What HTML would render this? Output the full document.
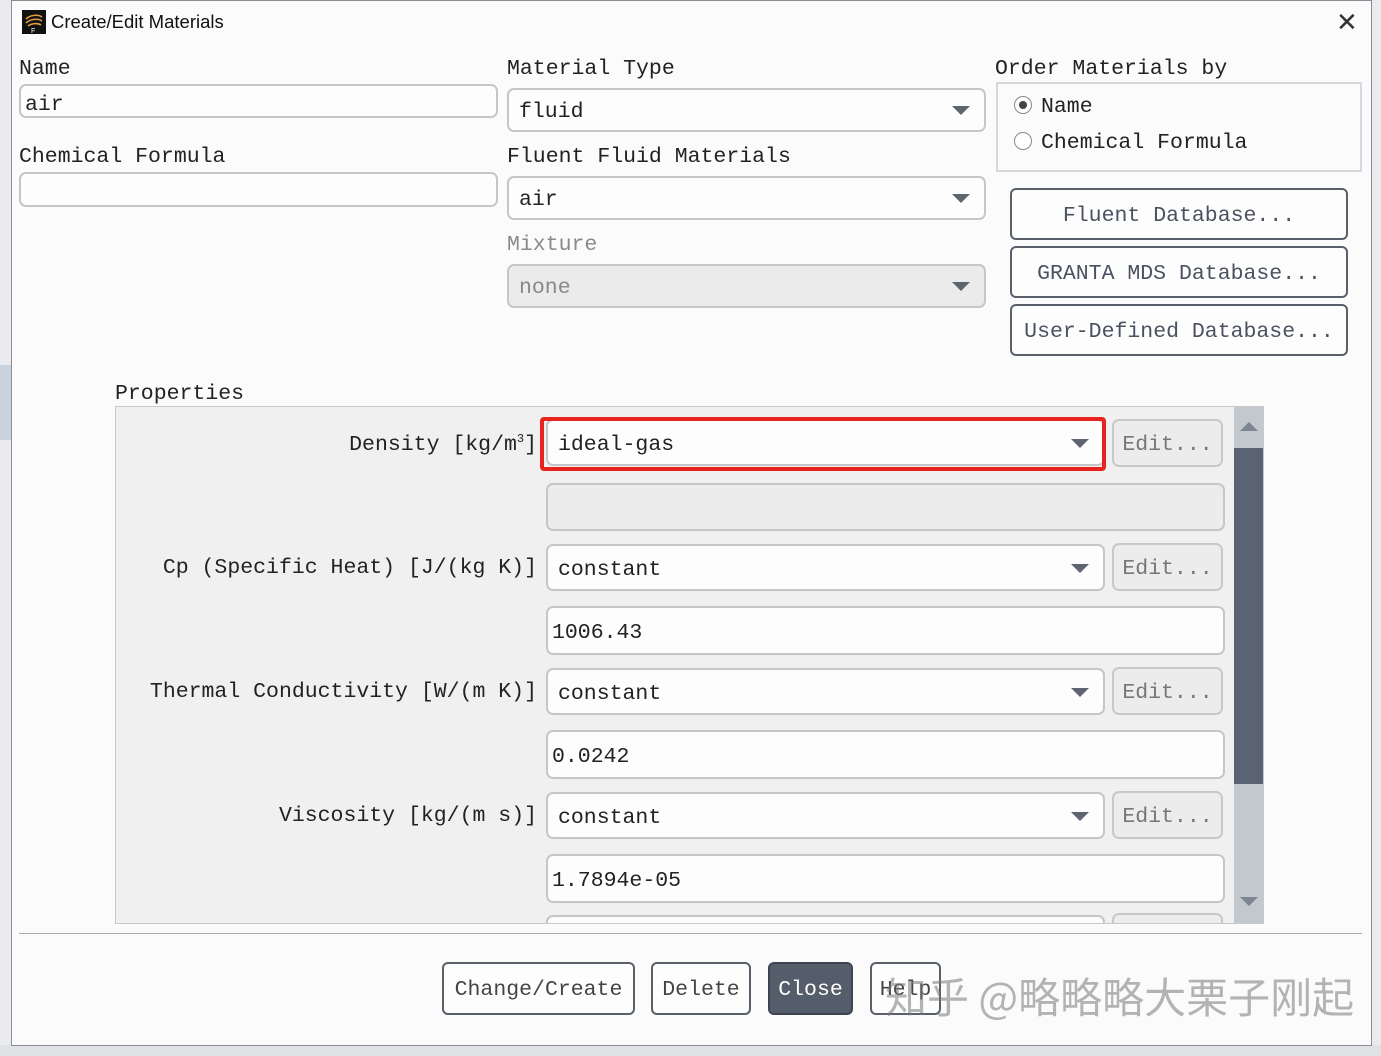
<!DOCTYPE html>
<html><head><meta charset="utf-8">
<style>
*{box-sizing:border-box;margin:0;padding:0}
html,body{width:1381px;height:1056px;overflow:hidden;background:#e9ebee;position:relative;font-family:"Liberation Mono","Noto Serif CJK SC",monospace;}
.a{position:absolute}
.t{font-size:21.5px;color:#222;white-space:pre;line-height:1;transform:translateY(2px)}
.inp{position:absolute;background:#fdfdfd;border:2px solid #c4c6ca;border-radius:7px}
.dd{position:absolute;background:#fdfdfd;border:2px solid #c4c6ca;border-radius:7px;font-size:21.5px;color:#222;padding-left:10px;padding-top:4px;display:flex;align-items:center}
.dd .ar{position:absolute;right:14px;top:50%;margin-top:-4px;width:0;height:0;border-left:9px solid transparent;border-right:9px solid transparent;border-top:9px solid #5e6570}
.btn{position:absolute;border:2px solid #59606a;border-radius:6px;background:#fdfdfd;font-size:21.5px;color:#4a5260;display:flex;align-items:center;justify-content:center;padding-top:3px}
.ed{position:absolute;border:2px solid #c6c8cc;border-radius:7px;background:#ececec;font-size:21.5px;color:#777;display:flex;align-items:center;justify-content:center;padding-top:3px}
.lbl{position:absolute;font-size:21.5px;color:#222;white-space:pre;transform:translateY(2px)}
</style></head><body>
<div class="a" style="left:0;top:365px;width:11px;height:75px;background:#c9d3df"></div>
<div class="a" style="left:0;top:1045px;width:1381px;height:11px;background:#dfe1e4"></div>
<div class="a" style="left:11px;top:0;width:1361px;height:1046px;background:#fbfbfb;border:1px solid #8a8d92"></div>
<svg class="a" style="left:22px;top:10px" width="24" height="24" viewBox="0 0 24 24"><rect width="24" height="24" fill="#111"/><path d="M4 9c4-4 12-5 16-2M4 13c4-4 12-5 16-2M6 16c4-3 10-3 13-1" stroke="#e0a040" stroke-width="1.6" fill="none"/><text x="9" y="23" font-size="7" fill="#fff" font-family="Liberation Sans">F</text></svg>
<div class="a" style="left:51px;top:11px;font-family:'Liberation Sans',sans-serif;font-size:18.5px;color:#111">Create/Edit Materials</div>
<div class="a" style="left:1336px;top:7px;font-family:'Liberation Sans',sans-serif;font-size:26px;color:#333">✕</div>

<div class="a t" style="left:19px;top:57px">Name</div>
<div class="inp" style="left:19px;top:84px;width:479px;height:34px"></div>
<div class="a t" style="left:25px;top:93px">air</div>
<div class="a t" style="left:19px;top:145px">Chemical Formula</div>
<div class="inp" style="left:19px;top:172px;width:479px;height:35px"></div>

<div class="a t" style="left:507px;top:57px">Material Type</div>
<div class="dd" style="left:507px;top:88px;width:479px;height:44px">fluid<span class="ar"></span></div>
<div class="a t" style="left:507px;top:145px">Fluent Fluid Materials</div>
<div class="dd" style="left:507px;top:176px;width:479px;height:44px">air<span class="ar"></span></div>
<div class="a t" style="left:507px;top:233px;color:#8a8a8a">Mixture</div>
<div class="dd" style="left:507px;top:264px;width:479px;height:44px;background:#ebebeb;color:#888">none<span class="ar"></span></div>

<div class="a t" style="left:995px;top:57px">Order Materials by</div>
<div class="a" style="left:996px;top:82px;width:366px;height:90px;border:2px solid #d6d8db"></div>
<div class="a" style="left:1014px;top:96px;width:18px;height:18px;border-radius:50%;border:1.5px solid #888;background:#fff"></div>
<div class="a" style="left:1019px;top:101px;width:8px;height:8px;border-radius:50%;background:#444"></div>
<div class="a t" style="left:1041px;top:95px">Name</div>
<div class="a" style="left:1014px;top:132px;width:18px;height:18px;border-radius:50%;border:1.5px solid #888;background:#fff"></div>
<div class="a t" style="left:1041px;top:131px">Chemical Formula</div>
<div class="btn" style="left:1010px;top:188px;width:338px;height:52px">Fluent Database...</div>
<div class="btn" style="left:1010px;top:246px;width:338px;height:52px">GRANTA MDS Database...</div>
<div class="btn" style="left:1010px;top:304px;width:338px;height:52px">User-Defined Database...</div>

<div class="a t" style="left:115px;top:382px">Properties</div>
<div class="a" style="left:115px;top:406px;width:1149px;height:518px;background:#f0f0f0;border:1px solid #c7c9cc;overflow:hidden">
 <div class="lbl" style="top:23px;right:726px">Density [kg/m<sup style="font-size:12px">3</sup>]</div>
 <div class="lbl" style="top:147px;right:726px">Cp (Specific Heat) [J/(kg K)]</div>
 <div class="lbl" style="top:271px;right:726px">Thermal Conductivity [W/(m K)]</div>
 <div class="lbl" style="top:395px;right:726px">Viscosity [kg/(m s)]</div>
 <div class="dd" style="left:430px;top:12px;width:559px;height:47px">ideal-gas<span class="ar"></span></div>
 <div class="a" style="left:424px;top:10px;width:566px;height:54px;border:4px solid #e8231f;border-radius:4px"></div>
 <div class="ed" style="left:996px;top:12px;width:111px;height:48px">Edit...</div>
 <div class="inp" style="left:430px;top:76px;width:679px;height:48px;background:#ececec"></div>
 <div class="dd" style="left:430px;top:137px;width:559px;height:47px">constant<span class="ar"></span></div>
 <div class="ed" style="left:996px;top:136px;width:111px;height:48px">Edit...</div>
 <div class="inp" style="left:430px;top:199px;width:679px;height:49px"></div>
 <div class="a t" style="left:436px;top:214px">1006.43</div>
 <div class="dd" style="left:430px;top:261px;width:559px;height:47px">constant<span class="ar"></span></div>
 <div class="ed" style="left:996px;top:260px;width:111px;height:48px">Edit...</div>
 <div class="inp" style="left:430px;top:323px;width:679px;height:49px"></div>
 <div class="a t" style="left:436px;top:338px">0.0242</div>
 <div class="dd" style="left:430px;top:385px;width:559px;height:47px">constant<span class="ar"></span></div>
 <div class="ed" style="left:996px;top:384px;width:111px;height:48px">Edit...</div>
 <div class="inp" style="left:430px;top:447px;width:679px;height:49px"></div>
 <div class="a t" style="left:436px;top:462px">1.7894e-05</div>
 <div class="inp" style="left:430px;top:508px;width:559px;height:47px"></div>
 <div class="ed" style="left:996px;top:506px;width:111px;height:48px"></div>
 <div class="a" style="left:1118px;top:0;width:30px;height:518px;background:#c2c8cd"></div>
 <div class="a" style="left:1118px;top:41px;width:30px;height:336px;background:#5a6372"></div>
 <div class="a" style="left:1124px;top:15px;width:0;height:0;border-left:9px solid transparent;border-right:9px solid transparent;border-bottom:9px solid #7d8590"></div>
 <div class="a" style="left:1124px;top:490px;width:0;height:0;border-left:9px solid transparent;border-right:9px solid transparent;border-top:9px solid #7d8590"></div>
</div>
<div class="a" style="left:19px;top:933px;width:1343px;height:1px;background:#a8aaae"></div>
<div class="btn" style="left:442px;top:962px;width:193px;height:53px;color:#444">Change/Create</div>
<div class="btn" style="left:651px;top:962px;width:100px;height:53px;color:#444">Delete</div>
<div class="btn" style="left:768px;top:962px;width:85px;height:53px;background:#545d6a;color:#fff;border-color:#3e4550">Close</div>
<div class="btn" style="left:870px;top:962px;width:71px;height:53px;color:#444">Help</div>
<div class="a" style="left:885px;top:975px;font-family:'Noto Sans CJK SC',sans-serif;font-size:42px;color:rgba(120,120,120,0.55);white-space:nowrap;line-height:1">知乎 @略略略大栗子刚起</div>
</body></html>
